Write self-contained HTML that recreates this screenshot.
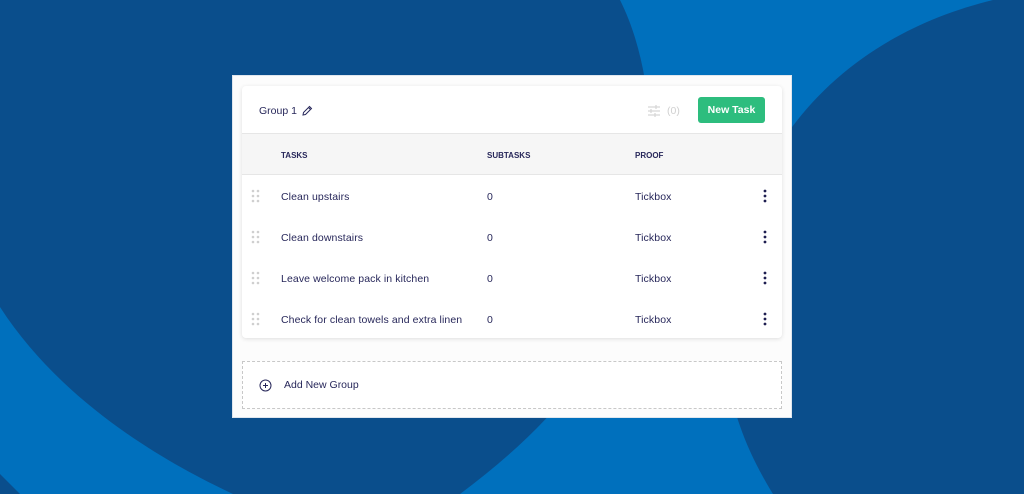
<!DOCTYPE html>
<html><head><style>
*{margin:0;padding:0;box-sizing:border-box}
body{width:1024px;height:494px;overflow:hidden;background:#0a4e8c;font-family:"Liberation Sans",sans-serif;color:#27275a;position:relative}
svg.bg{position:absolute;left:0;top:0}
.card{position:absolute;left:232px;top:75px;width:560px;height:343px;background:#fcfcfc;border:1px solid #dfe6ee}
.inner{position:absolute;left:9px;top:10px;width:540px;height:252px;background:#fff;border-radius:4px;box-shadow:0 1px 4px rgba(0,0,0,.12)}
.hdr{position:absolute;left:0;top:0;width:540px;height:48px;border-bottom:1px solid #e6e6e6}
.th{position:absolute;left:0;top:48px;width:540px;height:41px;background:#f6f6f6;border-bottom:1px solid #e6e6e6;font-size:8px;font-weight:bold}
.t{position:absolute;white-space:nowrap}
.row{position:absolute;left:0;width:540px;height:41px;font-size:10.5px;letter-spacing:0.1px}
.btn{position:absolute;left:456px;top:11px;width:67px;height:26px;background:#2dbd7e;border-radius:3px;color:#fff;font-size:10.5px;text-align:center;line-height:27px;font-weight:bold}
.add{position:absolute;left:9px;top:285px;width:540px;height:48px;border:1px dashed #c8c8c8;background:#fff}
</style></head><body>
<svg class="bg" width="1024" height="494">
<rect width="1024" height="494" fill="#0070bd"/>
<path d="M0,0 L620,0 C650,60 660,150 640,250 C620,340 560,420 460,494 L233,494 C160,460 60,400 0,307 Z" fill="#0a4e8c"/>
<path d="M0,474 L20,494 L0,494 Z" fill="#0a4e8c"/>
<path d="M1024,0 L993,0 C870,30 770,110 735,250 C720,330 715,400 773,494 L1024,494 Z" fill="#0a4e8c"/>
</svg>
<div class="card">
<div class="inner">
 <div class="hdr">
  <div class="t" style="left:17px;top:19px;font-size:10.5px">Group 1</div>
  <svg style="position:absolute;left:59px;top:19px" width="12" height="12" viewBox="0 0 12 12"><path d="M2,10 L2.5,7.5 L8.5,1.5 L10.5,3.5 L4.5,9.5 Z M7.5,2.5 L9.5,4.5" fill="none" stroke="#27275a" stroke-width="1"/></svg>
  <svg style="position:absolute;left:405px;top:19px" width="14" height="12" viewBox="0 0 14 12"><g stroke="#d6d6d6" stroke-width="1.2"><line x1="1" y1="2" x2="13" y2="2"/><line x1="1" y1="6" x2="13" y2="6"/><line x1="1" y1="10" x2="13" y2="10"/><line x1="9" y1="0" x2="9" y2="4"/><line x1="4" y1="4" x2="4" y2="8"/><line x1="8" y1="8" x2="8" y2="12"/></g></svg>
  <div class="t" style="left:425px;top:19px;font-size:10.5px;color:#d0d0d0">(0)</div>
  <div class="btn">New Task</div>
 </div>
 <div class="th">
  <div class="t" style="left:39px;top:17px">TASKS</div>
  <div class="t" style="left:245px;top:17px">SUBTASKS</div>
  <div class="t" style="left:393px;top:17px">PROOF</div>
 </div>
 <div class="row" style="top:89px"><div class="t" style="left:39px;top:16px">Clean upstairs</div><div class="t" style="left:245px;top:16px">0</div><div class="t" style="left:393px;top:16px">Tickbox</div></div>
 <div class="row" style="top:130px"><div class="t" style="left:39px;top:16px">Clean downstairs</div><div class="t" style="left:245px;top:16px">0</div><div class="t" style="left:393px;top:16px">Tickbox</div></div>
 <div class="row" style="top:171px"><div class="t" style="left:39px;top:16px">Leave welcome pack in kitchen</div><div class="t" style="left:245px;top:16px">0</div><div class="t" style="left:393px;top:16px">Tickbox</div></div>
 <div class="row" style="top:212px"><div class="t" style="left:39px;top:16px">Check for clean towels and extra linen</div><div class="t" style="left:245px;top:16px">0</div><div class="t" style="left:393px;top:16px">Tickbox</div></div>
 <svg style="position:absolute;left:0;top:89px" width="540" height="164">
  <g fill="#cfcfcf">
   <g id="d"><circle cx="11" cy="16" r="1.3"/><circle cx="16" cy="16" r="1.3"/><circle cx="11" cy="21" r="1.3"/><circle cx="16" cy="21" r="1.3"/><circle cx="11" cy="26" r="1.3"/><circle cx="16" cy="26" r="1.3"/></g>
   <use href="#d" y="41"/><use href="#d" y="82"/><use href="#d" y="123"/>
  </g>
  <g fill="#1e1e50">
   <g id="k"><circle cx="523" cy="16" r="1.4"/><circle cx="523" cy="21" r="1.4"/><circle cx="523" cy="26" r="1.4"/></g>
   <use href="#k" y="41"/><use href="#k" y="82"/><use href="#k" y="123"/>
  </g>
 </svg>
</div>
<div class="add">
 <svg style="position:absolute;left:16px;top:17px" width="13" height="13" viewBox="0 0 13 13"><circle cx="6.5" cy="6.5" r="5.5" fill="none" stroke="#27275a" stroke-width="1"/><path d="M6.5,4 V9 M4,6.5 H9" stroke="#27275a" stroke-width="1"/></svg>
 <div class="t" style="left:41px;top:17px;font-size:10.5px">Add New Group</div>
</div>
</div>
</body></html>
